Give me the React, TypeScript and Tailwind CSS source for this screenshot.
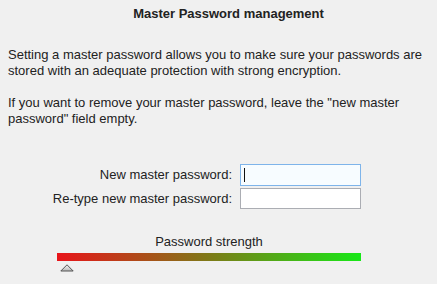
export default function App() {
  return (
    <div className="h-[284px] w-[437px] overflow-hidden bg-[#f0f0f0] text-[13px] leading-[16px] text-[#222] [font-family:'Liberation_Sans',Arial,sans-serif]">
      <h1 className="pt-[6px] pl-[20px] text-center font-bold">Master Password management</h1>
      <div className="mt-[25px] pl-[8px] whitespace-nowrap">
        <p>
          Setting a master password allows you to make sure your passwords are
          <br />
          stored with an adequate protection with strong encryption.
        </p>
        <p className="mt-[16px]">
          If you want to remove your master password, leave the &quot;new master
          <br />
          password&quot; field empty.
        </p>
      </div>
      <div className="mt-[37px] grid grid-cols-[232px_121px] gap-x-[8px] gap-y-[2px]">
        <label className="flex items-center justify-end">New master password:</label>
        <div className="flex h-[22px] items-center border border-[#7eb4ea] bg-[#f7fcff] pl-[3px]">
          <span className="h-[14px] w-px bg-[#111]" />
        </div>
        <label className="flex items-center justify-end">Re-type new master password:</label>
        <div className="h-[21px] border border-[#abadb3] bg-white" />
      </div>
      <div className="mt-[25px] ml-[57px] w-[304px]">
        <div className="text-center">Password strength</div>
        <div className="mt-[3px] h-[8px] bg-[linear-gradient(to_right,#e8141a,#7e7a18,#18e818)]" />
        <svg width="14" height="8" viewBox="0 0 14 8" className="mt-[3px] ml-[3px] block">
          <defs>
            <linearGradient id="tri" x1="0" y1="0" x2="0" y2="1">
              <stop offset="0" stopColor="#f4f4f4" />
              <stop offset="1" stopColor="#b8b8b8" />
            </linearGradient>
          </defs>
          <path d="M7 0.8 L13.2 7 L0.8 7 Z" fill="url(#tri)" stroke="#555" strokeWidth="1" strokeLinejoin="round" />
        </svg>
      </div>
    </div>
  );
}
